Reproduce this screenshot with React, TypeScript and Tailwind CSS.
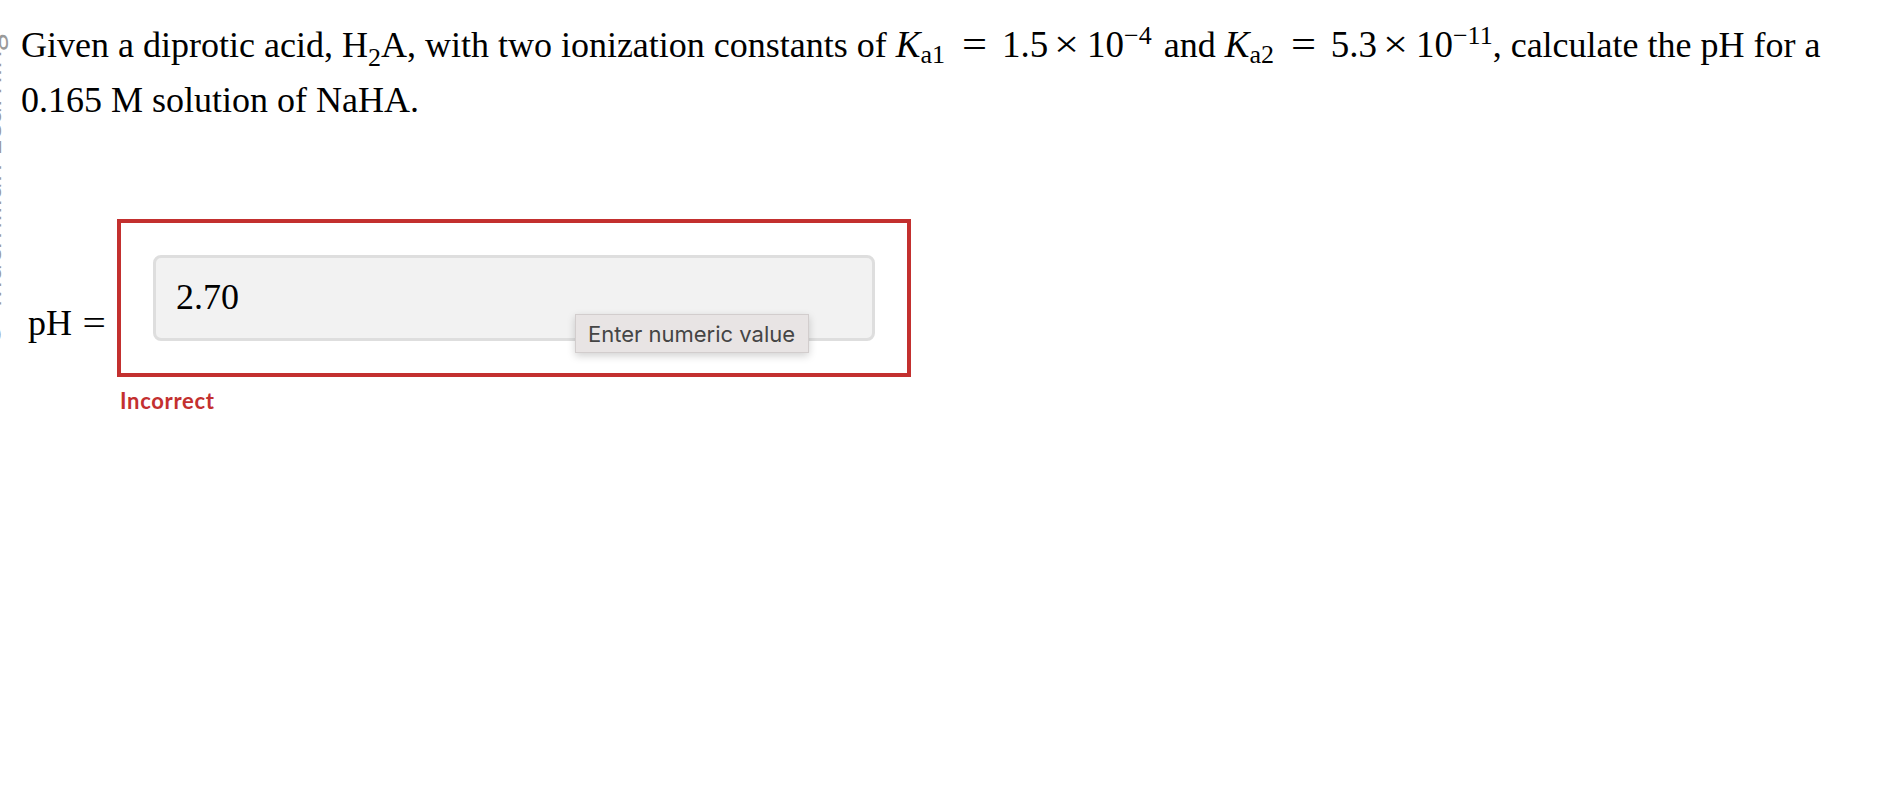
import React from "react";

function Sub({ children, drop = "top-[6px]" }: { children: React.ReactNode; drop?: string }) {
  return <span className={`relative ${drop} text-[26px] leading-none`}>{children}</span>;
}

function Sup({ children }: { children: React.ReactNode }) {
  return <span className="relative -top-[13px] text-[26px] leading-none">{children}</span>;
}

function Eq() {
  return <span className="inline-block ml-[19px] mr-[17px] text-[37px] leading-none scale-x-[1.2]">=</span>;
}

function Times() {
  return <span className="inline-block ml-[8px] mr-[10px] text-[37px] leading-none scale-x-[1.2]">×</span>;
}

function KSub({ sub }: { sub: string }) {
  return (
    <>
      <span className="italic text-[37px] leading-none">K</span>
      <Sub>{sub}</Sub>
    </>
  );
}

export default function App() {
  return (
    <div className="relative w-[1883px] h-[794px] bg-white overflow-hidden">
      <div className="absolute left-[-29px] top-[34px] [writing-mode:vertical-rl] rotate-180 font-['Open_Sans',sans-serif] text-[30px] leading-[37px] text-[#9a9a9a]">
        © Macmillan Learning
      </div>

      <div className="pl-[21px] pt-[18px] font-['Liberation_Serif',serif] text-[36px] leading-[55px] text-black">
        <p className="whitespace-nowrap">
          Given a diprotic acid, H<Sub drop="top-[9px]">2</Sub>A, with two ionization constants of{" "}
          <KSub sub="a1" />
          <Eq />
          <span className="text-[37px] leading-none">1.5</span>
          <Times />
          <span className="text-[37px] leading-none">10</span>
          <Sup>−4</Sup>
          <span className="ml-[12px]">and</span>{" "}
          <KSub sub="a2" />
          <Eq />
          <span className="text-[37px] leading-none">5.3</span>
          <Times />
          <span className="text-[37px] leading-none">10</span>
          <Sup>−11</Sup>, calculate the pH for a
          <br />
          0.165 M solution of NaHA.
        </p>
      </div>

      <div className="mt-[91px] flex items-start">
        <div className="w-[117px] pl-[28px] pt-[77px] font-['Liberation_Serif',serif] text-[36px] leading-[55px] text-black whitespace-nowrap">
          pH<span className="inline-block ml-[12px] scale-x-[1.15]">=</span>
        </div>
        <div className="flex flex-col">
          <div className="w-[794px] h-[158px] border-4 border-[#c3302f] p-[32px]">
            <div className="relative h-[86px] w-full rounded-[8px] border-[3px] border-[#dedede] bg-[#f2f2f2] pl-[20px] pt-[12px] font-['Liberation_Serif',serif] text-[36px] leading-[55px] text-black">
              2.70
              <div className="absolute left-[419px] top-[56px] w-[234px] h-[39px] flex items-center pl-[12px] bg-[#e8e4e4] border border-[#d2cdcd] shadow-[0_3px_8px_rgba(0,0,0,0.18)] font-['Inter',sans-serif] text-[22px] leading-none text-[#454545] whitespace-nowrap">
                Enter numeric value
              </div>
            </div>
          </div>
          <div className="mt-[11px] pl-[3px] font-['Lato',sans-serif] font-bold text-[22px] leading-[26px] tracking-[0.7px] text-[#c3302f]">
            Incorrect
          </div>
        </div>
      </div>
    </div>
  );
}
